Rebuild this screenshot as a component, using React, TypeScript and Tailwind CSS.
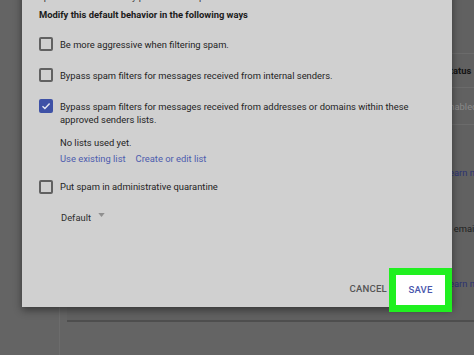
import * as React from 'react';

const FONT = { fontFamily: 'Roboto, "Liberation Sans", sans-serif' };

function Checkbox({ checked = false }: { checked?: boolean }) {
  if (checked) {
    return (
      <span className="shrink-0 w-[14px] h-[14px] rounded-[2px] bg-[#3e51a6] flex items-center justify-center">
        <svg viewBox="0 0 14 14" className="w-[14px] h-[14px]">
          <path d="M3.5 7.2 L5.9 9.5 L10.6 4.6" fill="none" stroke="#e6e8f2" strokeWidth="1.4" />
        </svg>
      </span>
    );
  }
  return <span className="shrink-0 w-[14px] h-[14px] rounded-[2px] border-2 border-[#616161]" />;
}

function Option({ checked, children }: { checked?: boolean; children: React.ReactNode }) {
  return (
    <div className="flex items-start gap-[7px]">
      <Checkbox checked={checked} />
      <div className="text-[9.4px] leading-[13px] text-[#232323] pt-[0.5px]">{children}</div>
    </div>
  );
}

export default function App() {
  return (
    <div className="relative w-[474px] h-[355px] overflow-hidden bg-[#646464]" style={FONT}>
      {/* page behind the overlay */}
      <div className="flex h-full">
        <div className="w-[60px] shrink-0 border-r border-[#6c6c6c]" />
        <div className="flex-1 pl-[7px]">
          <div className="h-[322px] border-b-2 border-[#4e4e4e] bg-[#616161] flex flex-col pl-[377px] text-[9.4px] leading-[13px] whitespace-nowrap">
            <div className="h-[53px]" />
            <div className="h-[35px] border-y border-[#6b6b6b] flex items-center font-bold text-[#141414]">Status</div>
            <div className="h-[37px] border-b border-[#6b6b6b] flex items-center text-[#8a8a8a]">Enabled</div>
            <div className="h-[94px] flex items-center text-[#2c3272]">Learn more</div>
            <div className="h-[18px] flex items-center text-[#1e1e1e]">in email</div>
            <div className="pt-[40px] text-[#2c3272]">Learn more</div>
          </div>
        </div>
      </div>

      {/* dialog */}
      <div className="absolute left-[22px] top-[-23px] w-[430px] h-[330px] bg-[#d0d0d0] shadow-[0_3px_8px_rgba(0,0,0,0.45)] flex flex-col pl-[17px] pr-[12px]">
        <div className="text-[9.4px] leading-[13px] text-[#3a3a3a] mt-[13px]">spam are automatically placed in the spam folder.</div>
        <div className="text-[9.4px] leading-[13px] font-bold text-[#1a1a1a] mt-[5px]">Modify this default behavior in the following ways</div>

        <div className="mt-[16px]">
          <Option>Be more aggressive when filtering spam.</Option>
        </div>
        <div className="mt-[17px]">
          <Option>Bypass spam filters for messages received from internal senders.</Option>
        </div>
        <div className="mt-[17px]">
          <Option checked>
            Bypass spam filters for messages received from addresses or domains within these
            <br />
            approved senders lists.
          </Option>
        </div>
        <div className="pl-[21px] mt-[10px] text-[9.4px] leading-[13px] text-[#232323]">No lists used yet.</div>
        <div className="pl-[21px] mt-[3px] flex gap-[10px] text-[9.4px] leading-[13px] text-[#4d5cae]">
          <span>Use existing list</span>
          <span>Create or edit list</span>
        </div>
        <div className="mt-[15px]">
          <Option>Put spam in administrative quarantine</Option>
        </div>
        <div className="pl-[22px] mt-[17px] flex items-center gap-[7px] text-[9.4px] leading-[13px] text-[#2e2e2e]">
          <span>Default</span>
          <svg viewBox="0 0 8 5" className="w-[7px] h-[4px] -mt-[5px]">
            <path d="M0 0 L8 0 L4 5 Z" fill="#8f8f8f" />
          </svg>
        </div>

        <div className="flex-1" />
        <div className="flex justify-end items-center gap-[8px] mb-[11px] mr-[-5px]">
          <span className="text-[9.6px] font-medium text-[#555555] tracking-[0.2px]">CANCEL</span>
          <span className="w-[50px] text-center text-[9.6px] font-medium text-[#4a57ad] tracking-[0.2px]">SAVE</span>
        </div>
      </div>

      {/* highlight annotation */}
      <div className="absolute left-[389px] top-[268px] w-[63px] h-[44px] bg-[#20f020] p-[7px]">
        <div className="w-full h-full bg-white flex items-center justify-center">
          <span className="text-[9.6px] font-medium text-[#4a57ad] tracking-[0.2px]">SAVE</span>
        </div>
      </div>
    </div>
  );
}
